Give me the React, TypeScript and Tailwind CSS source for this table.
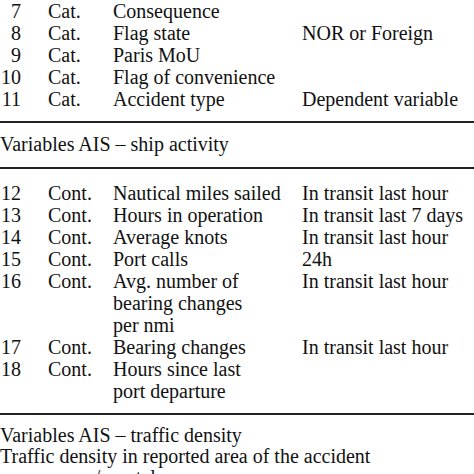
import React from 'react';

type Row = { n: string; kind: string; name: string[]; note?: string };

const catRows: Row[] = [
  { n: '7', kind: 'Cat.', name: ['Consequence'] },
  { n: '8', kind: 'Cat.', name: ['Flag state'], note: 'NOR or Foreign' },
  { n: '9', kind: 'Cat.', name: ['Paris MoU'] },
  { n: '10', kind: 'Cat.', name: ['Flag of convenience'] },
  { n: '11', kind: 'Cat.', name: ['Accident type'], note: 'Dependent variable' },
];

const aisRows: Row[] = [
  { n: '12', kind: 'Cont.', name: ['Nautical miles sailed'], note: 'In transit last hour' },
  { n: '13', kind: 'Cont.', name: ['Hours in operation'], note: 'In transit last 7 days' },
  { n: '14', kind: 'Cont.', name: ['Average knots'], note: 'In transit last hour' },
  { n: '15', kind: 'Cont.', name: ['Port calls'], note: '24h' },
  {
    n: '16',
    kind: 'Cont.',
    name: ['Avg. number of', 'bearing changes', 'per nmi'],
    note: 'In transit last hour',
  },
  { n: '17', kind: 'Cont.', name: ['Bearing changes'], note: 'In transit last hour' },
  { n: '18', kind: 'Cont.', name: ['Hours since last', 'port departure'] },
];

function TableRow({ row }: { row: Row }) {
  return (
    <div className="flex items-start">
      <span className="w-[21px] shrink-0 text-right">{row.n}</span>
      <span className="ml-[27px] w-[65px] shrink-0">{row.kind}</span>
      <span className="w-[189px] shrink-0">
        {row.name.map((line) => (
          <span key={line} className="block">
            {line}
          </span>
        ))}
      </span>
      <span className="whitespace-nowrap">{row.note}</span>
    </div>
  );
}

export default function App() {
  return (
    <div
      className="h-[474px] w-[474px] overflow-hidden bg-white text-[20px] leading-[22px] text-[#111]"
      style={{ fontFamily: '"Liberation Serif", "Times New Roman", serif' }}
    >
      <div>
        {catRows.map((r) => (
          <TableRow key={r.n} row={r} />
        ))}
      </div>
      <div className="mt-[11px] h-[2px] bg-[#222]" />
      <div className="mt-[10px]">Variables AIS – ship activity</div>
      <div className="mt-[12px] h-[2px] bg-[#222]" />
      <div className="mt-[13px]">
        {aisRows.map((r) => (
          <TableRow key={r.n} row={r} />
        ))}
      </div>
      <div className="mt-[11px] h-[2px] bg-[#222]" />
      <div className="mt-[10px] leading-[21px]">
        <div>Variables AIS – traffic density</div>
        <div>Traffic density in reported area of the accident</div>
        <div className="pl-[48px]">ocean/coastal zones</div>
      </div>
    </div>
  );
}
